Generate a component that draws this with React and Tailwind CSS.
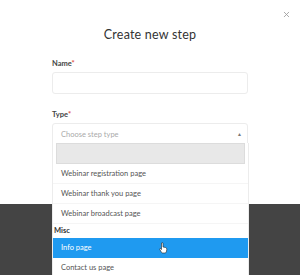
import { X } from "lucide-react";

const options = [
  "Webinar registration page",
  "Webinar thank you page",
  "Webinar broadcast page",
];

export default function App() {
  return (
    <div className="relative w-[300px] h-[275px] overflow-hidden bg-[#444444] font-['Lato',sans-serif]">
      <div className="h-[204px] bg-white relative">
        <button className="absolute right-[9px] top-[10px] text-[#9a9a9a]">
          <X size={9} strokeWidth={2.2} />
        </button>
        <h2 className="pt-[26px] text-center text-[12.5px] text-[#333] tracking-[0.2px]">
          Create new step
        </h2>
        <div className="px-[52px] pt-[15px]">
          <label className="block text-[7.5px] font-bold text-[#444] leading-none">
            Name<span className="text-[#e0463d]">*</span>
          </label>
          <div className="mt-[5px] h-[22px] rounded-[3px] border border-[#ececec] bg-white" />
          <label className="mt-[17px] block text-[7.5px] font-bold text-[#444] leading-none">
            Type<span className="text-[#e0463d]">*</span>
          </label>
          <div className="mt-[4px] h-[24px] rounded-t-[3px] border border-[#ececec] flex items-center justify-between pl-[8px] pr-[5px]">
            <span className="text-[7.5px] text-[#aaa]">Choose step type</span>
            <span className="text-[5px] text-[#777]">▲</span>
          </div>
        </div>
      </div>
      <div className="absolute left-[52px] top-[143px] w-[197px] bottom-0 bg-white border-x border-[#ececec]">
        <div className="mx-[3px] h-[21px] bg-[#e8e8e8] border border-[#dcdcdc]" />
        {options.map((o) => (
          <div key={o} className="h-[20px] flex items-center pl-[8px] text-[7.5px] text-[#555] border-b border-[#f5f5f5]">
            {o}
          </div>
        ))}
        <div className="h-[12px] flex items-end pl-[1px] text-[7.5px] font-bold text-[#333]">Misc</div>
        <div className="mt-[2px] h-[20px] flex items-center pl-[8px] text-[7.5px] text-white bg-[#1f9af0] relative">
          Info page
          <svg className="absolute left-[106px] top-[4px]" width="9" height="12" viewBox="0 0 9 12">
            <path d="M2.5 1 Q3.3 0.3 4 1 L4 5 L6.5 5.5 Q8 6 7.8 7.5 L7.3 10 Q7 11 6 11 L3.5 11 Q2.8 11 2.3 10 L0.8 7.5 Q0.5 6.5 1.5 6.5 L2.5 7.5 Z" fill="#fff" stroke="#222" strokeWidth="0.6" />
          </svg>
        </div>
        <div className="h-[20px] flex items-center pl-[8px] text-[7.5px] text-[#555]">
          Contact us page
        </div>
      </div>
    </div>
  );
}
